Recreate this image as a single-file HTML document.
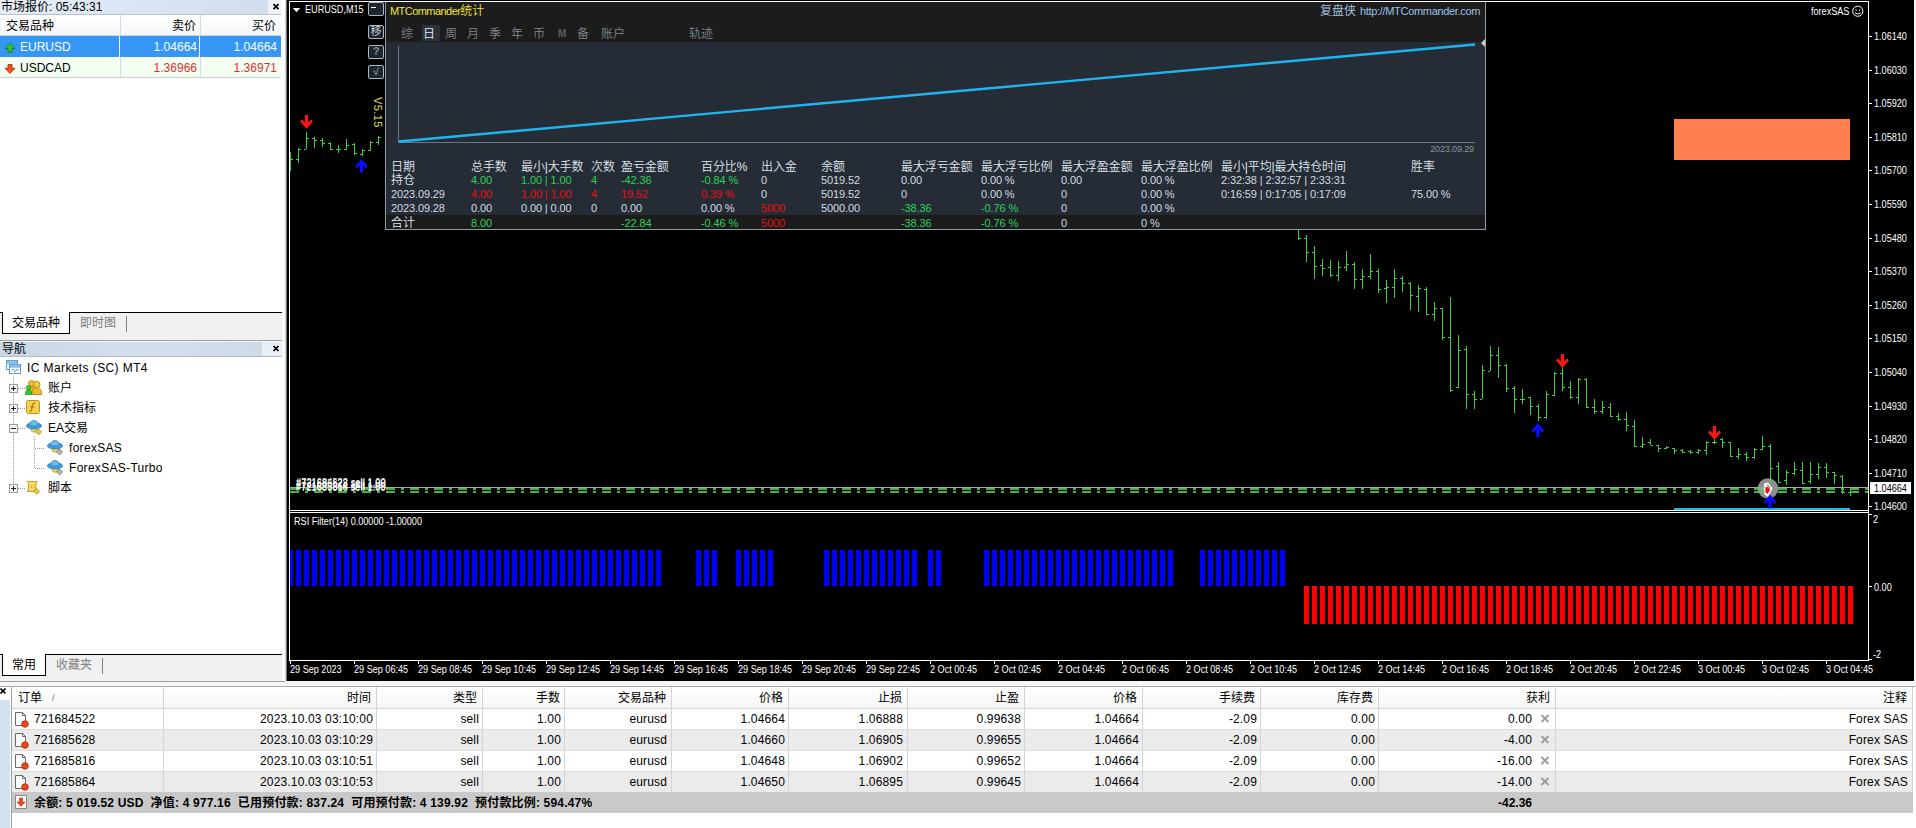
<!DOCTYPE html>
<html lang="zh-CN"><head><meta charset="utf-8"><title>MT4</title>
<style>
html,body{margin:0;padding:0;}
body{width:1916px;height:828px;overflow:hidden;background:#fff;position:relative;
font-family:"Liberation Sans","Noto Sans CJK SC",sans-serif;font-size:12px;color:#000;}
div{position:absolute;box-sizing:border-box;white-space:nowrap;}
.t{line-height:14px;}
.ui{font-size:12px;line-height:14px;color:#000;}
.ax{font-size:10px;line-height:10px;color:#fff;font-family:"Liberation Sans",sans-serif;transform:scaleX(0.91);transform-origin:0 0;}
.pn{font-size:11px;line-height:12px;color:#d3dae3;font-family:"Liberation Sans","Noto Sans CJK SC",sans-serif;font-weight:350;letter-spacing:-0.12px;}
.d{letter-spacing:0.15px;}
.g{color:#2fd05a;}
.r{color:#e51212;}
svg{position:absolute;left:0;top:0;}
</style></head><body>

<div style="left:0px;top:0px;width:281px;height:14px;background:linear-gradient(90deg,#e6edf6,#d0deee 95.3%,#eef2f7 95.3%);"></div>
<div class="t" style="left:1px;top:0px;font-size:12px;">市场报价: 05:43:31</div>
<svg width="290" height="680" viewBox="0 0 290 680"><path d="M273.500 4.200l5 5m0-5l-5 5" stroke="#000" stroke-width="1.700" fill="none"/></svg>
<div style="left:0px;top:14px;width:282px;height:1px;background:#b9c4d2;"></div>
<div style="left:0px;top:15px;width:282px;height:21px;background:linear-gradient(#ffffff,#f4f5f7);border-bottom:1px solid #d5d5d5;"></div>
<div style="left:120px;top:15px;width:1px;height:62px;background:#d9d9d9;"></div>
<div style="left:200px;top:15px;width:1px;height:62px;background:#d9d9d9;"></div>
<div class="t" style="left:6px;top:19px;">交易品种</div>
<div class="t" style="right:1720px;top:19px;">卖价</div>
<div class="t" style="right:1640px;top:19px;">买价</div>
<div style="left:0px;top:36px;width:119px;height:21px;background:#3596f6;"></div>
<div style="left:120px;top:36px;width:79px;height:21px;background:#3596f6;"></div>
<div style="left:200px;top:36px;width:82px;height:21px;background:#3596f6;"></div>
<div class="t" style="left:20px;top:40px;color:#fff;">EURUSD</div>
<div class="t" style="right:1719px;top:40px;color:#fff;">1.04664</div>
<div class="t" style="right:1639px;top:40px;color:#fff;">1.04664</div>
<div style="left:0px;top:57px;width:282px;height:20px;background:#f3fff3;"></div>
<div style="left:120px;top:57px;width:1px;height:20px;background:#d9d9d9;"></div>
<div style="left:200px;top:57px;width:1px;height:20px;background:#d9d9d9;"></div>
<div style="left:0px;top:77px;width:282px;height:1px;background:#d0d0d0;"></div>
<svg width="290" height="680" viewBox="0 0 290 680"><path d="M10 43.300l5 5.200h-3v3.700h-4v-3.700h-3z" fill="#2fc52f" stroke="#1d7a1d" stroke-width="0.900" stroke-linejoin="round"/><path d="M10 73.500l5-5.200h-3v-3.700h-4v3.700h-3z" fill="#f0531c" stroke="#a83208" stroke-width="0.900" stroke-linejoin="round"/></svg>
<div class="t" style="left:20px;top:61px;">USDCAD</div>
<div class="t" style="right:1719px;top:61px;color:#e03030;">1.36966</div>
<div class="t" style="right:1639px;top:61px;color:#e03030;">1.36971</div>
<div style="left:281px;top:0px;width:4px;height:681px;background:#fbfbfb;"></div>
<div style="left:0px;top:312px;width:282px;height:28px;background:#f0f0f0;"></div>
<div style="left:0px;top:312px;width:282px;height:1px;background:#000;"></div>
<div style="left:2px;top:312px;width:68px;height:22px;background:#fff;border:1px solid #000;border-top:0;"></div>
<div class="t" style="left:12px;top:316px;">交易品种</div>
<div class="t" style="left:80px;top:316px;color:#7c7c7c;">即时图</div>
<div style="left:126px;top:316px;width:1px;height:16px;background:#808080;"></div>
<div style="left:0px;top:340px;width:282px;height:1px;background:#a0a0a0;"></div>
<div style="left:0px;top:341px;width:282px;height:1px;background:#f4f7fa;"></div>
<div style="left:0px;top:342px;width:282px;height:14px;background:linear-gradient(90deg,#c9d7e5,#d3dfed 50%,#cddaea 93%,#e9eff7 93%);"></div>
<div class="t" style="left:2px;top:342px;">导航</div>
<svg width="290" height="680" viewBox="0 0 290 680"><path d="M273.500 346l5 5m0-5l-5 5" stroke="#000" stroke-width="1.700" fill="none"/></svg>
<div style="left:0px;top:356px;width:282px;height:1px;background:#b4bcc6;"></div>
<svg width="290" height="680" viewBox="0 0 290 680">
<g stroke="#9a9a9a" stroke-width="1" stroke-dasharray="1 1" shape-rendering="crispEdges" fill="none">
<path d="M13.5 377V488"/>
<path d="M18 388.5H25"/>
<path d="M18 408.5H25"/>
<path d="M18 428.5H25"/>
<path d="M18 488.5H25"/>
<path d="M34.5 437V469"/><path d="M35 448.5H45"/><path d="M35 468.5H45"/>
</g>
<rect x="9.5" y="384.5" width="8" height="8" fill="#f4f4f4" stroke="#9c9c9c" shape-rendering="crispEdges"/>
<rect x="11" y="388" width="5" height="1" fill="#222" shape-rendering="crispEdges"/>
<rect x="13" y="386" width="1" height="5" fill="#222" shape-rendering="crispEdges"/>
<rect x="9.5" y="404.5" width="8" height="8" fill="#f4f4f4" stroke="#9c9c9c" shape-rendering="crispEdges"/>
<rect x="11" y="408" width="5" height="1" fill="#222" shape-rendering="crispEdges"/>
<rect x="13" y="406" width="1" height="5" fill="#222" shape-rendering="crispEdges"/>
<rect x="9.5" y="424.5" width="8" height="8" fill="#f4f4f4" stroke="#9c9c9c" shape-rendering="crispEdges"/>
<rect x="11" y="428" width="5" height="1" fill="#222" shape-rendering="crispEdges"/>
<rect x="9.5" y="484.5" width="8" height="8" fill="#f4f4f4" stroke="#9c9c9c" shape-rendering="crispEdges"/>
<rect x="11" y="488" width="5" height="1" fill="#222" shape-rendering="crispEdges"/>
<rect x="13" y="486" width="1" height="5" fill="#222" shape-rendering="crispEdges"/>
<g fill="#fff" stroke="#5a9fd6" stroke-width="1">
<rect x="6.500" y="360.500" width="11" height="9" fill="#eaf3fb"/><rect x="6.500" y="360.500" width="11" height="2.500" fill="#9cc8ec"/>
<rect x="9.500" y="364.500" width="11" height="9"/><rect x="9.500" y="364.500" width="11" height="2.500" fill="#9cc8ec"/>
<path d="M11.500 371l1.500-2 2 3 2-3 1.500 2" fill="none" stroke-width="0.9"/>
</g>
<g stroke="#a87c0c" stroke-width="0.8">
<circle cx="31.500" cy="383.500" r="3" fill="#f0c030"/><path d="M27 393c0-4 1.500-6.500 4.500-6.500s4.500 2.500 4.500 6.500z" fill="#e8b424"/>
<circle cx="36.800" cy="384.500" r="3.200" fill="#f4cc40"/><path d="M31.800 394.500c0-4.500 2-7 5-7s5 2.500 5 7z" fill="#ecbc2c"/>
</g>
<circle cx="28.500" cy="387.800" r="2.300" fill="#38d038" stroke="#1c8c1c" stroke-width="0.7"/><path d="M25.300 394.500c0-3 1.200-4.600 3.200-4.600s3.200 1.600 3.200 4.600z" fill="#30c830" stroke="#1c8c1c" stroke-width="0.7"/>
<rect x="26.500" y="400.500" width="13" height="13" rx="2" fill="#f4d050" stroke="#b8941c"/>
<path d="M35.500 403.500c-2-.8-3 .2-3.200 2l-.8 4.500c-.2 1.200-1 1.600-2 1.200M30.500 406.800h4" fill="none" stroke="#b07c10" stroke-width="1.300"/>
<g transform="translate(26,419.5)"><ellipse cx="8.5" cy="9.6" rx="3.6" ry="3.2" fill="#f4d64a" stroke="#b89a20" stroke-width="0.7"/><ellipse cx="8" cy="6.3" rx="7.6" ry="3.1" fill="#3f9fe0" stroke="#2a78b8" stroke-width="0.7"/><path d="M3.6 5.6c0-3 2-4.6 4.4-4.6s4.4 1.6 4.4 4.600c-2 1.300-6.800 1.300-8.800 0z" fill="#6cbcf0" stroke="#2a78b8" stroke-width="0.7"/><path d="M12.300 9.300l3.200 3.200-2.800 2.800-3.200-3.200z" fill="#f0c840" stroke="#a88410" stroke-width="0.8"/></g>
<g transform="translate(47,439.5)"><ellipse cx="8.5" cy="9.6" rx="3.6" ry="3.2" fill="#f4d64a" stroke="#b89a20" stroke-width="0.7"/><ellipse cx="8" cy="6.3" rx="7.6" ry="3.1" fill="#3f9fe0" stroke="#2a78b8" stroke-width="0.7"/><path d="M3.6 5.6c0-3 2-4.6 4.4-4.6s4.4 1.6 4.4 4.600c-2 1.300-6.800 1.300-8.800 0z" fill="#6cbcf0" stroke="#2a78b8" stroke-width="0.7"/><path d="M12.300 9.300l3.200 3.200-2.800 2.800-3.200-3.200z" fill="#b8b8b8" stroke="#6a6a6a" stroke-width="0.8"/></g>
<g transform="translate(47,459.5)"><ellipse cx="8.5" cy="9.6" rx="3.6" ry="3.2" fill="#f4d64a" stroke="#b89a20" stroke-width="0.7"/><ellipse cx="8" cy="6.3" rx="7.6" ry="3.1" fill="#3f9fe0" stroke="#2a78b8" stroke-width="0.7"/><path d="M3.6 5.6c0-3 2-4.6 4.4-4.6s4.4 1.6 4.4 4.600c-2 1.300-6.800 1.300-8.800 0z" fill="#6cbcf0" stroke="#2a78b8" stroke-width="0.7"/><path d="M12.300 9.300l3.200 3.200-2.800 2.800-3.200-3.200z" fill="#b8b8b8" stroke="#6a6a6a" stroke-width="0.8"/></g>
<path d="M27 481.500h10.500l-1.500 1.500v7l1.500 1.500h-10.500l1.500-1.500v-7z" fill="#f6da60" stroke="#b8941c" stroke-width="0.8"/>
<path d="M31 485.500h1M33.500 485.500h1M31 487.500h1M33.500 487.500h1" stroke="#b8941c" stroke-width="0.8"/>
<path d="M36.500 488.300l3.200 3.200-2.800 2.800-3.200-3.200z" fill="#f0c840" stroke="#a88410" stroke-width="0.8"/>
</svg>
<div class="t" style="left:27px;top:361px;letter-spacing:0.4px;">IC Markets (SC) MT4</div>
<div class="t" style="left:48px;top:381px;">账户</div>
<div class="t" style="left:48px;top:401px;">技术指标</div>
<div class="t" style="left:48px;top:421px;">EA交易</div>
<div class="t" style="left:69px;top:441px;letter-spacing:0.3px;">forexSAS</div>
<div class="t" style="left:69px;top:461px;letter-spacing:0.3px;">ForexSAS-Turbo</div>
<div class="t" style="left:48px;top:481px;">脚本</div>
<div style="left:0px;top:654px;width:282px;height:27px;background:#f0f0f0;"></div>
<div style="left:0px;top:654px;width:282px;height:1px;background:#000;"></div>
<div style="left:2px;top:654px;width:44px;height:22px;background:#fff;border:1px solid #000;border-top:0;"></div>
<div class="t" style="left:12px;top:658px;">常用</div>
<div class="t" style="left:56px;top:658px;color:#808080;">收藏夹</div>
<div style="left:102px;top:658px;width:1px;height:16px;background:#808080;"></div>
<div style="left:285px;top:0px;width:1px;height:681px;background:#d0d0d0;"></div>
<div style="left:286px;top:0px;width:1px;height:681px;background:#7a7a7a;"></div>
<div style="left:287px;top:0px;width:1627px;height:681px;background:#000;"></div>
<div style="left:1914px;top:0px;width:2px;height:681px;background:#f8f8f8;"></div>
<div style="left:0px;top:681px;width:1916px;height:5px;background:#f6f6f6;"></div>
<div style="left:0px;top:681px;width:285px;height:1px;background:#a0a0a0;"></div>
<div style="left:0px;top:686px;width:1916px;height:1px;background:#a8a8a8;"></div>
<div style="left:0px;top:687px;width:1916px;height:141px;background:#fff;"></div>
<svg width="1916" height="828" viewBox="0 0 1916 828" shape-rendering="crispEdges">
<g fill="#fff">
<rect x="289" y="1" width="1580" height="1"/>
<rect x="289" y="1" width="1" height="660"/>
<rect x="1868" y="1" width="1" height="660"/>
<rect x="289" y="510" width="1580" height="1"/>
<rect x="289" y="512" width="1580" height="1"/>
<rect x="289" y="660" width="1580" height="1"/>
<rect x="1869" y="506" width="3" height="1"/>
<rect x="1869" y="473" width="3" height="1"/>
<rect x="1869" y="439" width="3" height="1"/>
<rect x="1869" y="406" width="3" height="1"/>
<rect x="1869" y="372" width="3" height="1"/>
<rect x="1869" y="338" width="3" height="1"/>
<rect x="1869" y="305" width="3" height="1"/>
<rect x="1869" y="271" width="3" height="1"/>
<rect x="1869" y="238" width="3" height="1"/>
<rect x="1869" y="204" width="3" height="1"/>
<rect x="1869" y="170" width="3" height="1"/>
<rect x="1869" y="137" width="3" height="1"/>
<rect x="1869" y="103" width="3" height="1"/>
<rect x="1869" y="70" width="3" height="1"/>
<rect x="1869" y="36" width="3" height="1"/>
<rect x="1869" y="514" width="3" height="1"/>
<rect x="1869" y="586" width="3" height="1"/>
<rect x="1869" y="659" width="3" height="1"/>
<rect x="290" y="661" width="1" height="3"/>
<rect x="354" y="661" width="1" height="3"/>
<rect x="418" y="661" width="1" height="3"/>
<rect x="482" y="661" width="1" height="3"/>
<rect x="546" y="661" width="1" height="3"/>
<rect x="610" y="661" width="1" height="3"/>
<rect x="674" y="661" width="1" height="3"/>
<rect x="738" y="661" width="1" height="3"/>
<rect x="802" y="661" width="1" height="3"/>
<rect x="866" y="661" width="1" height="3"/>
<rect x="930" y="661" width="1" height="3"/>
<rect x="994" y="661" width="1" height="3"/>
<rect x="1058" y="661" width="1" height="3"/>
<rect x="1122" y="661" width="1" height="3"/>
<rect x="1186" y="661" width="1" height="3"/>
<rect x="1250" y="661" width="1" height="3"/>
<rect x="1314" y="661" width="1" height="3"/>
<rect x="1378" y="661" width="1" height="3"/>
<rect x="1442" y="661" width="1" height="3"/>
<rect x="1506" y="661" width="1" height="3"/>
<rect x="1570" y="661" width="1" height="3"/>
<rect x="1634" y="661" width="1" height="3"/>
<rect x="1698" y="661" width="1" height="3"/>
<rect x="1762" y="661" width="1" height="3"/>
<rect x="1826" y="661" width="1" height="3"/>
</g>
<g fill="#3ad23a">
<rect x="290" y="152" width="1" height="19"/>
<rect x="291" y="159" width="2" height="1"/>
<rect x="298" y="148" width="1" height="15"/>
<rect x="296" y="159" width="2" height="1"/>
<rect x="299" y="149" width="2" height="1"/>
<rect x="306" y="132" width="1" height="17"/>
<rect x="304" y="149" width="2" height="1"/>
<rect x="307" y="138" width="2" height="1"/>
<rect x="314" y="137" width="1" height="11"/>
<rect x="312" y="138" width="2" height="1"/>
<rect x="315" y="140" width="2" height="1"/>
<rect x="322" y="138" width="1" height="9"/>
<rect x="320" y="140" width="2" height="1"/>
<rect x="323" y="143" width="2" height="1"/>
<rect x="330" y="142" width="1" height="8"/>
<rect x="328" y="143" width="2" height="1"/>
<rect x="331" y="149" width="2" height="1"/>
<rect x="338" y="145" width="1" height="8"/>
<rect x="336" y="149" width="2" height="1"/>
<rect x="339" y="149" width="2" height="1"/>
<rect x="346" y="139" width="1" height="11"/>
<rect x="344" y="149" width="2" height="1"/>
<rect x="347" y="145" width="2" height="1"/>
<rect x="354" y="143" width="1" height="12"/>
<rect x="352" y="144" width="2" height="1"/>
<rect x="355" y="153" width="2" height="1"/>
<rect x="362" y="149" width="1" height="7"/>
<rect x="360" y="154" width="2" height="1"/>
<rect x="363" y="150" width="2" height="1"/>
<rect x="370" y="141" width="1" height="10"/>
<rect x="368" y="150" width="2" height="1"/>
<rect x="371" y="142" width="2" height="1"/>
<rect x="378" y="136" width="1" height="9"/>
<rect x="376" y="142" width="2" height="1"/>
<rect x="379" y="137" width="2" height="1"/>
<rect x="1298" y="230" width="1" height="10"/>
<rect x="1299" y="238" width="2" height="1"/>
<rect x="1306" y="235" width="1" height="27"/>
<rect x="1304" y="238" width="2" height="1"/>
<rect x="1307" y="252" width="2" height="1"/>
<rect x="1314" y="246" width="1" height="33"/>
<rect x="1312" y="252" width="2" height="1"/>
<rect x="1315" y="266" width="2" height="1"/>
<rect x="1322" y="259" width="1" height="17"/>
<rect x="1320" y="265" width="2" height="1"/>
<rect x="1323" y="268" width="2" height="1"/>
<rect x="1330" y="260" width="1" height="17"/>
<rect x="1328" y="267" width="2" height="1"/>
<rect x="1331" y="275" width="2" height="1"/>
<rect x="1338" y="261" width="1" height="20"/>
<rect x="1336" y="275" width="2" height="1"/>
<rect x="1339" y="267" width="2" height="1"/>
<rect x="1346" y="251" width="1" height="20"/>
<rect x="1344" y="267" width="2" height="1"/>
<rect x="1347" y="264" width="2" height="1"/>
<rect x="1354" y="262" width="1" height="27"/>
<rect x="1352" y="264" width="2" height="1"/>
<rect x="1355" y="279" width="2" height="1"/>
<rect x="1362" y="269" width="1" height="20"/>
<rect x="1360" y="279" width="2" height="1"/>
<rect x="1363" y="276" width="2" height="1"/>
<rect x="1370" y="254" width="1" height="25"/>
<rect x="1368" y="276" width="2" height="1"/>
<rect x="1371" y="271" width="2" height="1"/>
<rect x="1378" y="269" width="1" height="24"/>
<rect x="1376" y="271" width="2" height="1"/>
<rect x="1379" y="289" width="2" height="1"/>
<rect x="1386" y="280" width="1" height="23"/>
<rect x="1384" y="288" width="2" height="1"/>
<rect x="1387" y="287" width="2" height="1"/>
<rect x="1394" y="269" width="1" height="29"/>
<rect x="1392" y="287" width="2" height="1"/>
<rect x="1395" y="278" width="2" height="1"/>
<rect x="1402" y="276" width="1" height="16"/>
<rect x="1400" y="278" width="2" height="1"/>
<rect x="1403" y="283" width="2" height="1"/>
<rect x="1410" y="282" width="1" height="28"/>
<rect x="1408" y="283" width="2" height="1"/>
<rect x="1411" y="295" width="2" height="1"/>
<rect x="1418" y="285" width="1" height="27"/>
<rect x="1416" y="296" width="2" height="1"/>
<rect x="1419" y="288" width="2" height="1"/>
<rect x="1426" y="287" width="1" height="28"/>
<rect x="1424" y="289" width="2" height="1"/>
<rect x="1427" y="314" width="2" height="1"/>
<rect x="1434" y="302" width="1" height="19"/>
<rect x="1432" y="314" width="2" height="1"/>
<rect x="1435" y="308" width="2" height="1"/>
<rect x="1442" y="308" width="1" height="32"/>
<rect x="1440" y="308" width="2" height="1"/>
<rect x="1443" y="337" width="2" height="1"/>
<rect x="1450" y="297" width="1" height="95"/>
<rect x="1448" y="337" width="2" height="1"/>
<rect x="1451" y="390" width="2" height="1"/>
<rect x="1458" y="335" width="1" height="53"/>
<rect x="1456" y="387" width="2" height="1"/>
<rect x="1459" y="350" width="2" height="1"/>
<rect x="1466" y="346" width="1" height="63"/>
<rect x="1464" y="349" width="2" height="1"/>
<rect x="1467" y="394" width="2" height="1"/>
<rect x="1474" y="391" width="1" height="18"/>
<rect x="1472" y="394" width="2" height="1"/>
<rect x="1475" y="399" width="2" height="1"/>
<rect x="1482" y="365" width="1" height="34"/>
<rect x="1480" y="399" width="2" height="1"/>
<rect x="1483" y="370" width="2" height="1"/>
<rect x="1490" y="346" width="1" height="25"/>
<rect x="1488" y="371" width="2" height="1"/>
<rect x="1491" y="355" width="2" height="1"/>
<rect x="1498" y="347" width="1" height="31"/>
<rect x="1496" y="355" width="2" height="1"/>
<rect x="1499" y="365" width="2" height="1"/>
<rect x="1506" y="364" width="1" height="28"/>
<rect x="1504" y="365" width="2" height="1"/>
<rect x="1507" y="388" width="2" height="1"/>
<rect x="1514" y="386" width="1" height="27"/>
<rect x="1512" y="388" width="2" height="1"/>
<rect x="1515" y="399" width="2" height="1"/>
<rect x="1522" y="389" width="1" height="15"/>
<rect x="1520" y="399" width="2" height="1"/>
<rect x="1523" y="399" width="2" height="1"/>
<rect x="1530" y="397" width="1" height="18"/>
<rect x="1528" y="397" width="2" height="1"/>
<rect x="1531" y="406" width="2" height="1"/>
<rect x="1538" y="404" width="1" height="17"/>
<rect x="1536" y="406" width="2" height="1"/>
<rect x="1539" y="417" width="2" height="1"/>
<rect x="1546" y="391" width="1" height="28"/>
<rect x="1544" y="417" width="2" height="1"/>
<rect x="1547" y="394" width="2" height="1"/>
<rect x="1554" y="372" width="1" height="24"/>
<rect x="1552" y="395" width="2" height="1"/>
<rect x="1555" y="373" width="2" height="1"/>
<rect x="1562" y="367" width="1" height="24"/>
<rect x="1560" y="373" width="2" height="1"/>
<rect x="1563" y="387" width="2" height="1"/>
<rect x="1570" y="381" width="1" height="18"/>
<rect x="1568" y="387" width="2" height="1"/>
<rect x="1571" y="397" width="2" height="1"/>
<rect x="1578" y="378" width="1" height="26"/>
<rect x="1576" y="397" width="2" height="1"/>
<rect x="1579" y="379" width="2" height="1"/>
<rect x="1586" y="378" width="1" height="30"/>
<rect x="1584" y="379" width="2" height="1"/>
<rect x="1587" y="407" width="2" height="1"/>
<rect x="1594" y="399" width="1" height="15"/>
<rect x="1592" y="407" width="2" height="1"/>
<rect x="1595" y="411" width="2" height="1"/>
<rect x="1602" y="401" width="1" height="13"/>
<rect x="1600" y="411" width="2" height="1"/>
<rect x="1603" y="407" width="2" height="1"/>
<rect x="1610" y="403" width="1" height="14"/>
<rect x="1608" y="407" width="2" height="1"/>
<rect x="1611" y="416" width="2" height="1"/>
<rect x="1618" y="413" width="1" height="8"/>
<rect x="1616" y="416" width="2" height="1"/>
<rect x="1619" y="419" width="2" height="1"/>
<rect x="1626" y="412" width="1" height="19"/>
<rect x="1624" y="419" width="2" height="1"/>
<rect x="1627" y="425" width="2" height="1"/>
<rect x="1634" y="420" width="1" height="27"/>
<rect x="1632" y="426" width="2" height="1"/>
<rect x="1635" y="446" width="2" height="1"/>
<rect x="1642" y="437" width="1" height="11"/>
<rect x="1640" y="446" width="2" height="1"/>
<rect x="1643" y="444" width="2" height="1"/>
<rect x="1650" y="439" width="1" height="6"/>
<rect x="1648" y="442" width="2" height="1"/>
<rect x="1651" y="445" width="2" height="1"/>
<rect x="1658" y="445" width="1" height="7"/>
<rect x="1656" y="445" width="2" height="1"/>
<rect x="1659" y="448" width="2" height="1"/>
<rect x="1666" y="446" width="1" height="3"/>
<rect x="1664" y="448" width="2" height="1"/>
<rect x="1667" y="447" width="2" height="1"/>
<rect x="1674" y="448" width="1" height="6"/>
<rect x="1672" y="448" width="2" height="1"/>
<rect x="1675" y="450" width="2" height="1"/>
<rect x="1682" y="449" width="1" height="4"/>
<rect x="1680" y="450" width="2" height="1"/>
<rect x="1683" y="452" width="2" height="1"/>
<rect x="1690" y="450" width="1" height="4"/>
<rect x="1688" y="451" width="2" height="1"/>
<rect x="1691" y="452" width="2" height="1"/>
<rect x="1698" y="449" width="1" height="5"/>
<rect x="1696" y="452" width="2" height="1"/>
<rect x="1699" y="450" width="2" height="1"/>
<rect x="1706" y="441" width="1" height="14"/>
<rect x="1704" y="450" width="2" height="1"/>
<rect x="1707" y="442" width="2" height="1"/>
<rect x="1714" y="439" width="1" height="5"/>
<rect x="1712" y="442" width="2" height="1"/>
<rect x="1715" y="442" width="2" height="1"/>
<rect x="1722" y="438" width="1" height="10"/>
<rect x="1720" y="439" width="2" height="1"/>
<rect x="1723" y="442" width="2" height="1"/>
<rect x="1730" y="442" width="1" height="15"/>
<rect x="1728" y="442" width="2" height="1"/>
<rect x="1731" y="456" width="2" height="1"/>
<rect x="1738" y="448" width="1" height="11"/>
<rect x="1736" y="456" width="2" height="1"/>
<rect x="1739" y="454" width="2" height="1"/>
<rect x="1746" y="452" width="1" height="9"/>
<rect x="1744" y="454" width="2" height="1"/>
<rect x="1747" y="457" width="2" height="1"/>
<rect x="1754" y="448" width="1" height="11"/>
<rect x="1752" y="457" width="2" height="1"/>
<rect x="1755" y="449" width="2" height="1"/>
<rect x="1762" y="436" width="1" height="14"/>
<rect x="1760" y="449" width="2" height="1"/>
<rect x="1763" y="446" width="2" height="1"/>
<rect x="1770" y="444" width="1" height="43"/>
<rect x="1768" y="446" width="2" height="1"/>
<rect x="1771" y="468" width="2" height="1"/>
<rect x="1778" y="462" width="1" height="21"/>
<rect x="1776" y="466" width="2" height="1"/>
<rect x="1779" y="482" width="2" height="1"/>
<rect x="1786" y="470" width="1" height="15"/>
<rect x="1784" y="480" width="2" height="1"/>
<rect x="1787" y="472" width="2" height="1"/>
<rect x="1794" y="462" width="1" height="13"/>
<rect x="1792" y="473" width="2" height="1"/>
<rect x="1795" y="469" width="2" height="1"/>
<rect x="1802" y="462" width="1" height="22"/>
<rect x="1800" y="470" width="2" height="1"/>
<rect x="1803" y="483" width="2" height="1"/>
<rect x="1810" y="462" width="1" height="22"/>
<rect x="1808" y="481" width="2" height="1"/>
<rect x="1811" y="474" width="2" height="1"/>
<rect x="1818" y="463" width="1" height="16"/>
<rect x="1816" y="474" width="2" height="1"/>
<rect x="1819" y="467" width="2" height="1"/>
<rect x="1826" y="463" width="1" height="15"/>
<rect x="1824" y="467" width="2" height="1"/>
<rect x="1827" y="472" width="2" height="1"/>
<rect x="1834" y="472" width="1" height="12"/>
<rect x="1832" y="472" width="2" height="1"/>
<rect x="1835" y="475" width="2" height="1"/>
<rect x="1842" y="475" width="1" height="19"/>
<rect x="1840" y="476" width="2" height="1"/>
<rect x="1843" y="492" width="2" height="1"/>
<rect x="1850" y="488" width="1" height="8"/>
<rect x="1848" y="492" width="2" height="1"/>
<rect x="1851" y="489" width="2" height="1"/>
</g>
<rect x="290" y="487" width="1578" height="1" fill="#a8a8a8"/>
<g stroke="#42b342" stroke-width="2" stroke-dasharray="9 6 3 6" fill="none">
<path d="M290 489H1868"/><path d="M290 492H1868"/>
</g>
<rect x="1674" y="508" width="176" height="2" fill="#19b5ee"/>
<rect x="1674" y="119" width="176" height="41" fill="#ff7f50"/>
<g fill="#0000ff">
<rect x="290" y="550" width="3" height="36"/>
<rect x="296" y="550" width="5" height="36"/>
<rect x="304" y="550" width="5" height="36"/>
<rect x="312" y="550" width="5" height="36"/>
<rect x="320" y="550" width="5" height="36"/>
<rect x="328" y="550" width="5" height="36"/>
<rect x="336" y="550" width="5" height="36"/>
<rect x="344" y="550" width="5" height="36"/>
<rect x="352" y="550" width="5" height="36"/>
<rect x="360" y="550" width="5" height="36"/>
<rect x="368" y="550" width="5" height="36"/>
<rect x="376" y="550" width="5" height="36"/>
<rect x="384" y="550" width="5" height="36"/>
<rect x="392" y="550" width="5" height="36"/>
<rect x="400" y="550" width="5" height="36"/>
<rect x="408" y="550" width="5" height="36"/>
<rect x="416" y="550" width="5" height="36"/>
<rect x="424" y="550" width="5" height="36"/>
<rect x="432" y="550" width="5" height="36"/>
<rect x="440" y="550" width="5" height="36"/>
<rect x="448" y="550" width="5" height="36"/>
<rect x="456" y="550" width="5" height="36"/>
<rect x="464" y="550" width="5" height="36"/>
<rect x="472" y="550" width="5" height="36"/>
<rect x="480" y="550" width="5" height="36"/>
<rect x="488" y="550" width="5" height="36"/>
<rect x="496" y="550" width="5" height="36"/>
<rect x="504" y="550" width="5" height="36"/>
<rect x="512" y="550" width="5" height="36"/>
<rect x="520" y="550" width="5" height="36"/>
<rect x="528" y="550" width="5" height="36"/>
<rect x="536" y="550" width="5" height="36"/>
<rect x="544" y="550" width="5" height="36"/>
<rect x="552" y="550" width="5" height="36"/>
<rect x="560" y="550" width="5" height="36"/>
<rect x="568" y="550" width="5" height="36"/>
<rect x="576" y="550" width="5" height="36"/>
<rect x="584" y="550" width="5" height="36"/>
<rect x="592" y="550" width="5" height="36"/>
<rect x="600" y="550" width="5" height="36"/>
<rect x="608" y="550" width="5" height="36"/>
<rect x="616" y="550" width="5" height="36"/>
<rect x="624" y="550" width="5" height="36"/>
<rect x="632" y="550" width="5" height="36"/>
<rect x="640" y="550" width="5" height="36"/>
<rect x="648" y="550" width="5" height="36"/>
<rect x="656" y="550" width="5" height="36"/>
<rect x="696" y="550" width="5" height="36"/>
<rect x="704" y="550" width="5" height="36"/>
<rect x="712" y="550" width="5" height="36"/>
<rect x="736" y="550" width="5" height="36"/>
<rect x="744" y="550" width="5" height="36"/>
<rect x="752" y="550" width="5" height="36"/>
<rect x="760" y="550" width="5" height="36"/>
<rect x="768" y="550" width="5" height="36"/>
<rect x="824" y="550" width="5" height="36"/>
<rect x="832" y="550" width="5" height="36"/>
<rect x="840" y="550" width="5" height="36"/>
<rect x="848" y="550" width="5" height="36"/>
<rect x="856" y="550" width="5" height="36"/>
<rect x="864" y="550" width="5" height="36"/>
<rect x="872" y="550" width="5" height="36"/>
<rect x="880" y="550" width="5" height="36"/>
<rect x="888" y="550" width="5" height="36"/>
<rect x="896" y="550" width="5" height="36"/>
<rect x="904" y="550" width="5" height="36"/>
<rect x="912" y="550" width="5" height="36"/>
<rect x="928" y="550" width="5" height="36"/>
<rect x="936" y="550" width="5" height="36"/>
<rect x="984" y="550" width="5" height="36"/>
<rect x="992" y="550" width="5" height="36"/>
<rect x="1000" y="550" width="5" height="36"/>
<rect x="1008" y="550" width="5" height="36"/>
<rect x="1016" y="550" width="5" height="36"/>
<rect x="1024" y="550" width="5" height="36"/>
<rect x="1032" y="550" width="5" height="36"/>
<rect x="1040" y="550" width="5" height="36"/>
<rect x="1048" y="550" width="5" height="36"/>
<rect x="1056" y="550" width="5" height="36"/>
<rect x="1064" y="550" width="5" height="36"/>
<rect x="1072" y="550" width="5" height="36"/>
<rect x="1080" y="550" width="5" height="36"/>
<rect x="1088" y="550" width="5" height="36"/>
<rect x="1096" y="550" width="5" height="36"/>
<rect x="1104" y="550" width="5" height="36"/>
<rect x="1112" y="550" width="5" height="36"/>
<rect x="1120" y="550" width="5" height="36"/>
<rect x="1128" y="550" width="5" height="36"/>
<rect x="1136" y="550" width="5" height="36"/>
<rect x="1144" y="550" width="5" height="36"/>
<rect x="1152" y="550" width="5" height="36"/>
<rect x="1160" y="550" width="5" height="36"/>
<rect x="1168" y="550" width="5" height="36"/>
<rect x="1200" y="550" width="5" height="36"/>
<rect x="1208" y="550" width="5" height="36"/>
<rect x="1216" y="550" width="5" height="36"/>
<rect x="1224" y="550" width="5" height="36"/>
<rect x="1232" y="550" width="5" height="36"/>
<rect x="1240" y="550" width="5" height="36"/>
<rect x="1248" y="550" width="5" height="36"/>
<rect x="1256" y="550" width="5" height="36"/>
<rect x="1264" y="550" width="5" height="36"/>
<rect x="1272" y="550" width="5" height="36"/>
<rect x="1280" y="550" width="5" height="36"/>
</g><g fill="#ff0000">
<rect x="1304" y="586" width="5" height="38"/>
<rect x="1312" y="586" width="5" height="38"/>
<rect x="1320" y="586" width="5" height="38"/>
<rect x="1328" y="586" width="5" height="38"/>
<rect x="1336" y="586" width="5" height="38"/>
<rect x="1344" y="586" width="5" height="38"/>
<rect x="1352" y="586" width="5" height="38"/>
<rect x="1360" y="586" width="5" height="38"/>
<rect x="1368" y="586" width="5" height="38"/>
<rect x="1376" y="586" width="5" height="38"/>
<rect x="1384" y="586" width="5" height="38"/>
<rect x="1392" y="586" width="5" height="38"/>
<rect x="1400" y="586" width="5" height="38"/>
<rect x="1408" y="586" width="5" height="38"/>
<rect x="1416" y="586" width="5" height="38"/>
<rect x="1424" y="586" width="5" height="38"/>
<rect x="1432" y="586" width="5" height="38"/>
<rect x="1440" y="586" width="5" height="38"/>
<rect x="1448" y="586" width="5" height="38"/>
<rect x="1456" y="586" width="5" height="38"/>
<rect x="1464" y="586" width="5" height="38"/>
<rect x="1472" y="586" width="5" height="38"/>
<rect x="1480" y="586" width="5" height="38"/>
<rect x="1488" y="586" width="5" height="38"/>
<rect x="1496" y="586" width="5" height="38"/>
<rect x="1504" y="586" width="5" height="38"/>
<rect x="1512" y="586" width="5" height="38"/>
<rect x="1520" y="586" width="5" height="38"/>
<rect x="1528" y="586" width="5" height="38"/>
<rect x="1536" y="586" width="5" height="38"/>
<rect x="1544" y="586" width="5" height="38"/>
<rect x="1552" y="586" width="5" height="38"/>
<rect x="1560" y="586" width="5" height="38"/>
<rect x="1568" y="586" width="5" height="38"/>
<rect x="1576" y="586" width="5" height="38"/>
<rect x="1584" y="586" width="5" height="38"/>
<rect x="1592" y="586" width="5" height="38"/>
<rect x="1600" y="586" width="5" height="38"/>
<rect x="1608" y="586" width="5" height="38"/>
<rect x="1616" y="586" width="5" height="38"/>
<rect x="1624" y="586" width="5" height="38"/>
<rect x="1632" y="586" width="5" height="38"/>
<rect x="1640" y="586" width="5" height="38"/>
<rect x="1648" y="586" width="5" height="38"/>
<rect x="1656" y="586" width="5" height="38"/>
<rect x="1664" y="586" width="5" height="38"/>
<rect x="1672" y="586" width="5" height="38"/>
<rect x="1680" y="586" width="5" height="38"/>
<rect x="1688" y="586" width="5" height="38"/>
<rect x="1696" y="586" width="5" height="38"/>
<rect x="1704" y="586" width="5" height="38"/>
<rect x="1712" y="586" width="5" height="38"/>
<rect x="1720" y="586" width="5" height="38"/>
<rect x="1728" y="586" width="5" height="38"/>
<rect x="1736" y="586" width="5" height="38"/>
<rect x="1744" y="586" width="5" height="38"/>
<rect x="1752" y="586" width="5" height="38"/>
<rect x="1760" y="586" width="5" height="38"/>
<rect x="1768" y="586" width="5" height="38"/>
<rect x="1776" y="586" width="5" height="38"/>
<rect x="1784" y="586" width="5" height="38"/>
<rect x="1792" y="586" width="5" height="38"/>
<rect x="1800" y="586" width="5" height="38"/>
<rect x="1808" y="586" width="5" height="38"/>
<rect x="1816" y="586" width="5" height="38"/>
<rect x="1824" y="586" width="5" height="38"/>
<rect x="1832" y="586" width="5" height="38"/>
<rect x="1840" y="586" width="5" height="38"/>
<rect x="1848" y="586" width="5" height="38"/>
</g>
</svg>
<svg width="1916" height="828" viewBox="0 0 1916 828">
<path fill="#ff1414" d="M304.9 115h3.2v7.6l3-3.2 1.8 2.2-6.4 7.2-6.4-7.2 1.8-2.2 3 3.2z"/>
<path fill="#ff1414" d="M1560.9 354h3.2v7.6l3-3.2 1.8 2.2-6.4 7.2-6.4-7.2 1.8-2.2 3 3.2z"/>
<path fill="#ff1414" d="M1712.9 426h3.2v7.6l3-3.2 1.8 2.2-6.4 7.2-6.4-7.2 1.8-2.2 3 3.2z"/>
<path fill="#0c0cff" d="M360.0 172.8h3.2v-7.6l3 3.2 1.8-2.2-6.4-7.2-6.4 7.2 1.8 2.2 3-3.2z"/>
<path fill="#0c0cff" d="M1536.2 437.1h3.2v-7.6l3 3.2 1.8-2.2-6.4-7.2-6.4 7.2 1.8 2.2 3-3.2z"/>
<circle cx="1768" cy="488.5" r="10.3" fill="#9a9a9a" fill-opacity="0.92"/>
<rect x="1770" y="476" width="1" height="12" fill="#5fc05f"/>
<rect x="1758" y="488" width="7" height="2" fill="#6fbf6f"/><rect x="1758" y="491" width="7" height="2" fill="#6fbf6f"/>
<path fill="#0c0cff" d="M1768.4 508.3h3.2v-7.6l3 3.2 1.8-2.2-6.4-7.2-6.4 7.2 1.8 2.2 3-3.2z"/>
<path d="M1764 483.5l4-1 4.5 6-4.5 8.5-3.5-2.5z" fill="#fff"/>
<path d="M1765.3 487.5l2.2-.8 2.8 2.6-2.6 4.8-2.2-1.6z" fill="#f01010"/>
<path d="M1767.2 484.6l2.6 3.4" stroke="#b02020" stroke-width="0.9" fill="none"/>
</svg>
<div class="ax" style="left:1874px;top:502px;">1.04600</div>
<div class="ax" style="left:1874px;top:469px;">1.04710</div>
<div class="ax" style="left:1874px;top:435px;">1.04820</div>
<div class="ax" style="left:1874px;top:402px;">1.04930</div>
<div class="ax" style="left:1874px;top:368px;">1.05040</div>
<div class="ax" style="left:1874px;top:334px;">1.05150</div>
<div class="ax" style="left:1874px;top:301px;">1.05260</div>
<div class="ax" style="left:1874px;top:267px;">1.05370</div>
<div class="ax" style="left:1874px;top:234px;">1.05480</div>
<div class="ax" style="left:1874px;top:200px;">1.05590</div>
<div class="ax" style="left:1874px;top:166px;">1.05700</div>
<div class="ax" style="left:1874px;top:133px;">1.05810</div>
<div class="ax" style="left:1874px;top:99px;">1.05920</div>
<div class="ax" style="left:1874px;top:66px;">1.06030</div>
<div class="ax" style="left:1874px;top:32px;">1.06140</div>
<div style="left:1870px;top:482px;width:41px;height:12px;background:#fff;"></div>
<div class="ax" style="left:1874px;top:483.5px;color:#000;">1.04664</div>
<div class="ax" style="left:1873px;top:515px;">2</div>
<div class="ax" style="left:1874px;top:583px;">0.00</div>
<div class="ax" style="left:1873px;top:650px;">-2</div>
<div class="ax" style="left:290px;top:665px;">29 Sep 2023</div>
<div class="ax" style="left:354px;top:665px;">29 Sep 06:45</div>
<div class="ax" style="left:418px;top:665px;">29 Sep 08:45</div>
<div class="ax" style="left:482px;top:665px;">29 Sep 10:45</div>
<div class="ax" style="left:546px;top:665px;">29 Sep 12:45</div>
<div class="ax" style="left:610px;top:665px;">29 Sep 14:45</div>
<div class="ax" style="left:674px;top:665px;">29 Sep 16:45</div>
<div class="ax" style="left:738px;top:665px;">29 Sep 18:45</div>
<div class="ax" style="left:802px;top:665px;">29 Sep 20:45</div>
<div class="ax" style="left:866px;top:665px;">29 Sep 22:45</div>
<div class="ax" style="left:930px;top:665px;">2 Oct 00:45</div>
<div class="ax" style="left:994px;top:665px;">2 Oct 02:45</div>
<div class="ax" style="left:1058px;top:665px;">2 Oct 04:45</div>
<div class="ax" style="left:1122px;top:665px;">2 Oct 06:45</div>
<div class="ax" style="left:1186px;top:665px;">2 Oct 08:45</div>
<div class="ax" style="left:1250px;top:665px;">2 Oct 10:45</div>
<div class="ax" style="left:1314px;top:665px;">2 Oct 12:45</div>
<div class="ax" style="left:1378px;top:665px;">2 Oct 14:45</div>
<div class="ax" style="left:1442px;top:665px;">2 Oct 16:45</div>
<div class="ax" style="left:1506px;top:665px;">2 Oct 18:45</div>
<div class="ax" style="left:1570px;top:665px;">2 Oct 20:45</div>
<div class="ax" style="left:1634px;top:665px;">2 Oct 22:45</div>
<div class="ax" style="left:1698px;top:665px;">3 Oct 00:45</div>
<div class="ax" style="left:1762px;top:665px;">3 Oct 02:45</div>
<div class="ax" style="left:1826px;top:665px;">3 Oct 04:45</div>
<svg width="1916" height="828" viewBox="0 0 1916 828"><path d="M292.800 8h7.400l-3.700 4.200z" fill="#fff"/></svg>
<div class="ax" style="left:305px;top:5px;">EURUSD,M15</div>
<div class="ax" style="left:1811px;top:7px;">forexSAS</div>
<svg width="1916" height="828" viewBox="0 0 1916 828"><circle cx="1857.8" cy="11.2" r="5.1" fill="none" stroke="#fff" stroke-width="1"/><rect x="1855.500" y="9.500" width="1.200" height="1.200" fill="#fff"/><rect x="1859" y="9.500" width="1.200" height="1.200" fill="#fff"/><path d="M1855 12.800q2.800 2.400 5.600 0" stroke="#fff" fill="none" stroke-width="1"/></svg>
<div class="ax" style="left:294px;top:517px;">RSI Filter(14) 0.00000 -1.00000</div>
<div class="ax" style="left:296px;top:478px;letter-spacing:0.15px;">#721684522 sell 1.00</div>
<div class="ax" style="left:296px;top:479px;letter-spacing:0.15px;">#721685628 sell 1.00</div>
<div class="ax" style="left:296px;top:482px;letter-spacing:0.15px;">#721685864 sell 1.00</div>
<div class="ax" style="left:296px;top:483px;letter-spacing:0.15px;">#721685816 sell 1.00</div>
<div class="ax" style="left:372px;top:97px;color:#e8e040;font-size:11px;letter-spacing:0.4px;line-height:12px;transform-origin:0 0;transform:rotate(90deg) translate(0,-12px);">V5.15</div>
<div style="left:368px;top:2px;width:16px;height:14px;border:1px solid #a9b7c6;border-radius:2px;background:#1f252d;color:#fff;font-size:10px;line-height:11px;text-align:center;font-family:'Liberation Sans','Noto Sans CJK SC',sans-serif;"></div>
<div style="left:368px;top:25px;width:16px;height:14px;border:1px solid #a9b7c6;border-radius:2px;background:#1f252d;color:#c4ccd6;font-size:10px;line-height:11px;text-align:center;font-family:'Liberation Sans','Noto Sans CJK SC',sans-serif;font-size:11px;">移</div>
<div style="left:368px;top:45px;width:16px;height:14px;border:1px solid #a9b7c6;border-radius:2px;background:#1f252d;color:#8e8e8e;font-size:10px;line-height:11px;text-align:center;font-family:'Liberation Sans','Noto Sans CJK SC',sans-serif;font-weight:bold;font-size:11px;">?</div>
<div style="left:368px;top:65px;width:16px;height:14px;border:1px solid #a9b7c6;border-radius:2px;background:#1f252d;color:#8e8e8e;font-size:10px;line-height:11px;text-align:center;font-family:'Liberation Sans','Noto Sans CJK SC',sans-serif;font-weight:bold;">√</div>
<div style="left:371px;top:7px;width:5px;height:1px;background:#fff;"></div>
<div style="left:385px;top:2px;width:1101px;height:228px;background:#1c1c1c;border:1px solid #8e9bab;border-top:0;"></div>
<div style="left:386px;top:42px;width:1099px;height:173px;background:#262c35;"></div>
<div style="left:386px;top:215px;width:1099px;height:14px;background:#1b1b1b;"></div>
<div class="pn" style="left:390px;top:5px;color:#f2e63c;font-size:11px;letter-spacing:-0.55px;">MTCommander<span style="font-size:12px;letter-spacing:0">统计</span></div>
<div class="pn" style="left:1320px;top:4px;font-size:12px;line-height:14px;color:#a9c6e4;letter-spacing:0;">复盘侠</div>
<div class="pn" style="left:1360px;top:5px;color:#9cc2ea;font-size:11px;letter-spacing:-0.32px;">http://MTCommander.com</div>
<div style="left:422px;top:25px;width:18px;height:16px;background:#2b323b;"></div>
<div class="pn" style="left:401px;top:27px;font-size:12px;line-height:14px;color:#7f8790;">综</div>
<div class="pn" style="left:423px;top:27px;font-size:12px;line-height:14px;color:#e6edf5;">日</div>
<div class="pn" style="left:445px;top:27px;font-size:12px;line-height:14px;color:#7f8790;">周</div>
<div class="pn" style="left:467px;top:27px;font-size:12px;line-height:14px;color:#7f8790;">月</div>
<div class="pn" style="left:489px;top:27px;font-size:12px;line-height:14px;color:#7f8790;">季</div>
<div class="pn" style="left:511px;top:27px;font-size:12px;line-height:14px;color:#7f8790;">年</div>
<div class="pn" style="left:533px;top:27px;font-size:12px;line-height:14px;color:#7f8790;">币</div>
<div class="pn" style="left:577px;top:27px;font-size:12px;line-height:14px;color:#7f8790;">备</div>
<div class="pn" style="left:601px;top:27px;font-size:12px;line-height:14px;color:#7f8790;">账户</div>
<div class="pn" style="left:689px;top:27px;font-size:12px;line-height:14px;color:#7f8790;">轨迹</div>
<div class="pn" style="left:558px;top:28px;font-size:10px;font-weight:bold;color:#59606a;">M</div>
<svg width="1916" height="828" viewBox="0 0 1916 828">
<rect x="398" y="46" width="1" height="97" fill="#707780" shape-rendering="crispEdges"/>
<rect x="398" y="142" width="1077" height="1" fill="#707780" shape-rendering="crispEdges"/>
<path d="M399 141.5L1475 44.5" stroke="#1db4f0" stroke-width="2.4" fill="none"/>
<path d="M1481 43l4-4v8z" fill="#c8d0d8"/>
</svg>
<div class="pn" style="right:442px;top:144px;font-size:9px;line-height:10px;color:#8b939d;">2023.09.29</div>
<div class="pn" style="left:391px;top:160px;font-size:12px;line-height:14px;color:#dfe6ee;">日期</div>
<div class="pn" style="left:471px;top:160px;font-size:12px;line-height:14px;color:#dfe6ee;">总手数</div>
<div class="pn" style="left:521px;top:160px;font-size:12px;line-height:14px;color:#dfe6ee;">最小|大手数</div>
<div class="pn" style="left:591px;top:160px;font-size:12px;line-height:14px;color:#dfe6ee;">次数</div>
<div class="pn" style="left:621px;top:160px;font-size:12px;line-height:14px;color:#dfe6ee;">盈亏金额</div>
<div class="pn" style="left:701px;top:160px;font-size:12px;line-height:14px;color:#dfe6ee;">百分比%</div>
<div class="pn" style="left:761px;top:160px;font-size:12px;line-height:14px;color:#dfe6ee;">出入金</div>
<div class="pn" style="left:821px;top:160px;font-size:12px;line-height:14px;color:#dfe6ee;">余额</div>
<div class="pn" style="left:901px;top:160px;font-size:12px;line-height:14px;color:#dfe6ee;">最大浮亏金额</div>
<div class="pn" style="left:981px;top:160px;font-size:12px;line-height:14px;color:#dfe6ee;">最大浮亏比例</div>
<div class="pn" style="left:1061px;top:160px;font-size:12px;line-height:14px;color:#dfe6ee;">最大浮盈金额</div>
<div class="pn" style="left:1141px;top:160px;font-size:12px;line-height:14px;color:#dfe6ee;">最大浮盈比例</div>
<div class="pn" style="left:1221px;top:160px;font-size:12px;line-height:14px;color:#dfe6ee;">最小|平均|最大持仓时间</div>
<div class="pn" style="left:1411px;top:160px;font-size:12px;line-height:14px;color:#dfe6ee;">胜率</div>
<div class="pn" style="left:391px;top:174px;font-size:12px;color:#dfe6ee;">持仓</div>
<div class="pn g" style="left:471px;top:174px;">4.00</div>
<div class="pn g" style="left:521px;top:174px;">1.00 | 1.00</div>
<div class="pn g" style="left:591px;top:174px;">4</div>
<div class="pn g" style="left:621px;top:174px;">-42.36</div>
<div class="pn g" style="left:701px;top:174px;">-0.84 %</div>
<div class="pn" style="left:761px;top:174px;">0</div>
<div class="pn" style="left:821px;top:174px;">5019.52</div>
<div class="pn" style="left:901px;top:174px;">0.00</div>
<div class="pn" style="left:981px;top:174px;">0.00 %</div>
<div class="pn" style="left:1061px;top:174px;">0.00</div>
<div class="pn" style="left:1141px;top:174px;">0.00 %</div>
<div class="pn" style="left:1221px;top:174px;">2:32:38 | 2:32:57 | 2:33:31</div>
<div class="pn" style="left:391px;top:188px;">2023.09.29</div>
<div class="pn r" style="left:471px;top:188px;">4.00</div>
<div class="pn r" style="left:521px;top:188px;">1.00 | 1.00</div>
<div class="pn r" style="left:591px;top:188px;">4</div>
<div class="pn r" style="left:621px;top:188px;">19.52</div>
<div class="pn r" style="left:701px;top:188px;">0.39 %</div>
<div class="pn" style="left:761px;top:188px;">0</div>
<div class="pn" style="left:821px;top:188px;">5019.52</div>
<div class="pn" style="left:901px;top:188px;">0</div>
<div class="pn" style="left:981px;top:188px;">0.00 %</div>
<div class="pn" style="left:1061px;top:188px;">0</div>
<div class="pn" style="left:1141px;top:188px;">0.00 %</div>
<div class="pn" style="left:1221px;top:188px;">0:16:59 | 0:17:05 | 0:17:09</div>
<div class="pn" style="left:1411px;top:188px;">75.00 %</div>
<div class="pn" style="left:391px;top:202px;">2023.09.28</div>
<div class="pn" style="left:471px;top:202px;">0.00</div>
<div class="pn" style="left:521px;top:202px;">0.00 | 0.00</div>
<div class="pn" style="left:591px;top:202px;">0</div>
<div class="pn" style="left:621px;top:202px;">0.00</div>
<div class="pn" style="left:701px;top:202px;">0.00 %</div>
<div class="pn r" style="left:761px;top:202px;">5000</div>
<div class="pn" style="left:821px;top:202px;">5000.00</div>
<div class="pn g" style="left:901px;top:202px;">-38.36</div>
<div class="pn g" style="left:981px;top:202px;">-0.76 %</div>
<div class="pn" style="left:1061px;top:202px;">0</div>
<div class="pn" style="left:1141px;top:202px;">0.00 %</div>
<div class="pn" style="left:391px;top:217px;font-size:12px;color:#dfe6ee;">合计</div>
<div class="pn g" style="left:471px;top:217px;">8.00</div>
<div class="pn g" style="left:621px;top:217px;">-22.84</div>
<div class="pn g" style="left:701px;top:217px;">-0.46 %</div>
<div class="pn r" style="left:761px;top:217px;">5000</div>
<div class="pn g" style="left:901px;top:217px;">-38.36</div>
<div class="pn g" style="left:981px;top:217px;">-0.76 %</div>
<div class="pn" style="left:1061px;top:217px;">0</div>
<div class="pn" style="left:1141px;top:217px;">0 %</div>
<div style="left:0;top:687px;width:11px;height:141px;background:#fff;"></div>
<div style="left:0;top:700px;width:10px;height:128px;background:#d3e2f1;"></div>
<svg width="20" height="828" viewBox="0 0 20 828"><path d="M0.500 688.500l5 5m0-5l-5 5" stroke="#000" stroke-width="1.700" fill="none"/></svg>
<div style="left:11px;top:687px;width:1px;height:141px;background:#a0a0a0;"></div>
<div style="left:12px;top:687px;width:1901px;height:22px;background:linear-gradient(#ffffff,#f6f6f6);border-bottom:1px solid #d5d5d5;"></div>
<div style="left:12px;top:709px;width:1901px;height:21px;background:#ffffff;border-bottom:1px solid #dcdcdc;"></div>
<div style="left:12px;top:730px;width:1901px;height:21px;background:#ebebeb;border-bottom:1px solid #dcdcdc;"></div>
<div style="left:12px;top:751px;width:1901px;height:21px;background:#ffffff;border-bottom:1px solid #dcdcdc;"></div>
<div style="left:12px;top:772px;width:1901px;height:21px;background:#ebebeb;border-bottom:1px solid #dcdcdc;"></div>
<div style="left:12px;top:792px;width:1901px;height:21px;background:#c9c9c9;"></div>
<div style="left:163px;top:687px;width:1px;height:105px;background:#d4d4d4;"></div>
<div style="left:376px;top:687px;width:1px;height:105px;background:#d4d4d4;"></div>
<div style="left:482px;top:687px;width:1px;height:105px;background:#d4d4d4;"></div>
<div style="left:564px;top:687px;width:1px;height:105px;background:#d4d4d4;"></div>
<div style="left:671px;top:687px;width:1px;height:105px;background:#d4d4d4;"></div>
<div style="left:788px;top:687px;width:1px;height:105px;background:#d4d4d4;"></div>
<div style="left:907px;top:687px;width:1px;height:105px;background:#d4d4d4;"></div>
<div style="left:1024px;top:687px;width:1px;height:105px;background:#d4d4d4;"></div>
<div style="left:1142px;top:687px;width:1px;height:105px;background:#d4d4d4;"></div>
<div style="left:1260px;top:687px;width:1px;height:105px;background:#d4d4d4;"></div>
<div style="left:1378px;top:687px;width:1px;height:105px;background:#d4d4d4;"></div>
<div style="left:1555px;top:687px;width:1px;height:105px;background:#d4d4d4;"></div>
<div style="left:1912px;top:687px;width:1px;height:105px;background:#d4d4d4;"></div>
<div class="t" style="left:18px;top:691px;">订单</div>
<div class="t" style="left:52px;top:691px;color:#707070;font-size:9px;">/</div>
<div class="t" style="right:1545px;top:691px;">时间</div>
<div class="t" style="right:1439px;top:691px;">类型</div>
<div class="t" style="right:1356px;top:691px;">手数</div>
<div class="t" style="right:1250px;top:691px;">交易品种</div>
<div class="t" style="right:1133px;top:691px;">价格</div>
<div class="t" style="right:1014px;top:691px;">止损</div>
<div class="t" style="right:897px;top:691px;">止盈</div>
<div class="t" style="right:779px;top:691px;">价格</div>
<div class="t" style="right:661px;top:691px;">手续费</div>
<div class="t" style="right:543px;top:691px;">库存费</div>
<div class="t" style="right:366px;top:691px;">获利</div>
<div class="t" style="right:9px;top:691px;">注释</div>
<div class="t d" style="left:34px;top:712px;">721684522</div>
<div class="t d" style="right:1543px;top:712px;">2023.10.03 03:10:00</div>
<div class="t d" style="right:1437px;top:712px;">sell</div>
<div class="t d" style="right:1355px;top:712px;">1.00</div>
<div class="t d" style="right:1249px;top:712px;">eurusd</div>
<div class="t d" style="right:1131px;top:712px;">1.04664</div>
<div class="t d" style="right:1013px;top:712px;">1.06888</div>
<div class="t d" style="right:895px;top:712px;">0.99638</div>
<div class="t d" style="right:777px;top:712px;">1.04664</div>
<div class="t d" style="right:659px;top:712px;">-2.09</div>
<div class="t d" style="right:541px;top:712px;">0.00</div>
<div class="t d" style="right:384px;top:712px;">0.00</div>
<div class="t d" style="right:8px;top:712px;">Forex SAS</div>
<svg width="1916" height="828" viewBox="0 0 1916 828"><path d="M1541.5 715l7 7m0-7l-7 7" stroke="#9a9a9a" stroke-width="1.8" fill="none"/></svg>
<svg width="1916" height="828" viewBox="0 0 1916 828"><path d="M15.5 712.5h7l3 3v10h-10z" fill="#fff" stroke="#6a6a6a" stroke-width="1"/><path d="M22.5 712.5v3h3" fill="none" stroke="#6a6a6a" stroke-width="1"/><circle cx="25" cy="724" r="3.3" fill="#e8481c" stroke="#a82a0a" stroke-width="0.8"/></svg>
<div class="t d" style="left:34px;top:733px;">721685628</div>
<div class="t d" style="right:1543px;top:733px;">2023.10.03 03:10:29</div>
<div class="t d" style="right:1437px;top:733px;">sell</div>
<div class="t d" style="right:1355px;top:733px;">1.00</div>
<div class="t d" style="right:1249px;top:733px;">eurusd</div>
<div class="t d" style="right:1131px;top:733px;">1.04660</div>
<div class="t d" style="right:1013px;top:733px;">1.06905</div>
<div class="t d" style="right:895px;top:733px;">0.99655</div>
<div class="t d" style="right:777px;top:733px;">1.04664</div>
<div class="t d" style="right:659px;top:733px;">-2.09</div>
<div class="t d" style="right:541px;top:733px;">0.00</div>
<div class="t d" style="right:384px;top:733px;">-4.00</div>
<div class="t d" style="right:8px;top:733px;">Forex SAS</div>
<svg width="1916" height="828" viewBox="0 0 1916 828"><path d="M1541.5 736l7 7m0-7l-7 7" stroke="#9a9a9a" stroke-width="1.8" fill="none"/></svg>
<svg width="1916" height="828" viewBox="0 0 1916 828"><path d="M15.5 733.5h7l3 3v10h-10z" fill="#fff" stroke="#6a6a6a" stroke-width="1"/><path d="M22.5 733.5v3h3" fill="none" stroke="#6a6a6a" stroke-width="1"/><circle cx="25" cy="745" r="3.3" fill="#e8481c" stroke="#a82a0a" stroke-width="0.8"/></svg>
<div class="t d" style="left:34px;top:754px;">721685816</div>
<div class="t d" style="right:1543px;top:754px;">2023.10.03 03:10:51</div>
<div class="t d" style="right:1437px;top:754px;">sell</div>
<div class="t d" style="right:1355px;top:754px;">1.00</div>
<div class="t d" style="right:1249px;top:754px;">eurusd</div>
<div class="t d" style="right:1131px;top:754px;">1.04648</div>
<div class="t d" style="right:1013px;top:754px;">1.06902</div>
<div class="t d" style="right:895px;top:754px;">0.99652</div>
<div class="t d" style="right:777px;top:754px;">1.04664</div>
<div class="t d" style="right:659px;top:754px;">-2.09</div>
<div class="t d" style="right:541px;top:754px;">0.00</div>
<div class="t d" style="right:384px;top:754px;">-16.00</div>
<div class="t d" style="right:8px;top:754px;">Forex SAS</div>
<svg width="1916" height="828" viewBox="0 0 1916 828"><path d="M1541.5 757l7 7m0-7l-7 7" stroke="#9a9a9a" stroke-width="1.8" fill="none"/></svg>
<svg width="1916" height="828" viewBox="0 0 1916 828"><path d="M15.5 754.5h7l3 3v10h-10z" fill="#fff" stroke="#6a6a6a" stroke-width="1"/><path d="M22.5 754.5v3h3" fill="none" stroke="#6a6a6a" stroke-width="1"/><circle cx="25" cy="766" r="3.3" fill="#e8481c" stroke="#a82a0a" stroke-width="0.8"/></svg>
<div class="t d" style="left:34px;top:775px;">721685864</div>
<div class="t d" style="right:1543px;top:775px;">2023.10.03 03:10:53</div>
<div class="t d" style="right:1437px;top:775px;">sell</div>
<div class="t d" style="right:1355px;top:775px;">1.00</div>
<div class="t d" style="right:1249px;top:775px;">eurusd</div>
<div class="t d" style="right:1131px;top:775px;">1.04650</div>
<div class="t d" style="right:1013px;top:775px;">1.06895</div>
<div class="t d" style="right:895px;top:775px;">0.99645</div>
<div class="t d" style="right:777px;top:775px;">1.04664</div>
<div class="t d" style="right:659px;top:775px;">-2.09</div>
<div class="t d" style="right:541px;top:775px;">0.00</div>
<div class="t d" style="right:384px;top:775px;">-14.00</div>
<div class="t d" style="right:8px;top:775px;">Forex SAS</div>
<svg width="1916" height="828" viewBox="0 0 1916 828"><path d="M1541.5 778l7 7m0-7l-7 7" stroke="#9a9a9a" stroke-width="1.8" fill="none"/></svg>
<svg width="1916" height="828" viewBox="0 0 1916 828"><path d="M15.5 775.5h7l3 3v10h-10z" fill="#fff" stroke="#6a6a6a" stroke-width="1"/><path d="M22.5 775.5v3h3" fill="none" stroke="#6a6a6a" stroke-width="1"/><circle cx="25" cy="787" r="3.3" fill="#e8481c" stroke="#a82a0a" stroke-width="0.8"/></svg>
<div class="t" style="left:34px;top:796px;font-weight:bold;letter-spacing:0.18px;">余额: 5 019.52 USD&nbsp; 净值: 4 977.16&nbsp; 已用预付款: 837.24&nbsp; 可用预付款: 4 139.92&nbsp; 预付款比例: 594.47%</div>
<div class="t" style="right:384px;top:796px;font-weight:bold;">-42.36</div>
<svg width="1916" height="828" viewBox="0 0 1916 828"><rect x="15.5" y="795.5" width="11" height="13" fill="#fff" stroke="#8a8a8a"/><path d="M19.5 798h3v4h2.5l-4 4.5-4-4.5h2.5z" fill="#e8481c" stroke="#b03010" stroke-width="0.6"/></svg>
</body></html>
